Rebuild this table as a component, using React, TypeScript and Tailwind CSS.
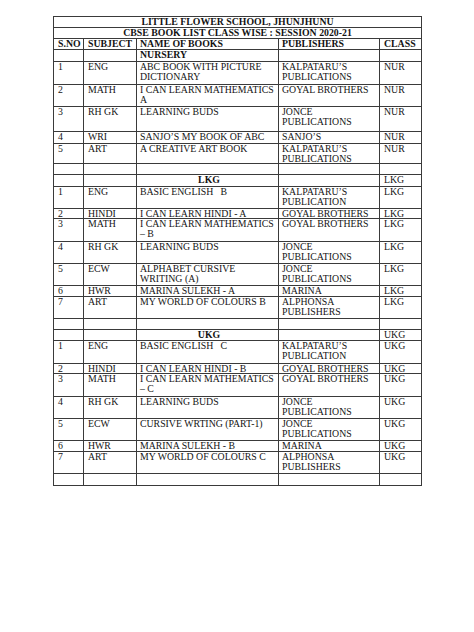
type Row = {
  h: string;
  cells: string[];
  bold?: boolean;
  section?: boolean;
};

const cols = ["w-[30px] pl-[4px]", "w-[53px] pl-[4px]", "w-[142px] pl-[3px]", "w-[101px] pl-[3px]", "w-[42px] pl-[4px]"];

const rows: Row[] = [
  { h: "h-[11px]", cells: ["S.NO", "SUBJECT", "NAME OF BOOKS", "PUBLISHERS", "CLASS"], bold: true },
  { h: "h-[12px]", cells: ["", "", "NURSERY", "", ""], bold: true },
  { h: "h-[23px]", cells: ["1", "ENG", "ABC BOOK WITH PICTURE\nDICTIONARY", "KALPATARU’S\nPUBLICATIONS", "NUR"] },
  { h: "h-[22px]", cells: ["2", "MATH", "I CAN LEARN MATHEMATICS\nA", "GOYAL BROTHERS", "NUR"] },
  { h: "h-[25px]", cells: ["3", "RH GK", "LEARNING BUDS", "JONCE\nPUBLICATIONS", "NUR"] },
  { h: "h-[12px]", cells: ["4", "WRI", "SANJO’S MY BOOK OF ABC", "SANJO’S", "NUR"] },
  { h: "h-[20px]", cells: ["5", "ART", "A CREATIVE ART BOOK", "KALPATARU’S\nPUBLICATIONS", "NUR"] },
  { h: "h-[11px]", cells: ["", "", "", "", ""] },
  { h: "h-[12px]", cells: ["", "", "LKG", "", "LKG"], section: true },
  { h: "h-[22px]", cells: ["1", "ENG", "BASIC ENGLISH   B", "KALPATARU’S\nPUBLICATION", "LKG"] },
  { h: "h-[10px]", cells: ["2", "HINDI", "I CAN LEARN HINDI - A", "GOYAL BROTHERS", "LKG"] },
  { h: "h-[23px]", cells: ["3", "MATH", "I CAN LEARN MATHEMATICS\n– B", "GOYAL BROTHERS", "LKG"] },
  { h: "h-[22px]", cells: ["4", "RH GK", "LEARNING BUDS", "JONCE\nPUBLICATIONS", "LKG"] },
  { h: "h-[22px]", cells: ["5", "ECW", "ALPHABET CURSIVE\nWRITING (A)", "JONCE\nPUBLICATIONS", "LKG"] },
  { h: "h-[11px]", cells: ["6", "HWR", "MARINA SULEKH - A", "MARINA", "LKG"] },
  { h: "h-[22px]", cells: ["7", "ART", "MY WORLD OF COLOURS B", "ALPHONSA\nPUBLISHERS", "LKG"] },
  { h: "h-[11px]", cells: ["", "", "", "", ""] },
  { h: "h-[11px]", cells: ["", "", "UKG", "", "UKG"], section: true },
  { h: "h-[23px]", cells: ["1", "ENG", "BASIC ENGLISH   C", "KALPATARU’S\nPUBLICATION", "UKG"] },
  { h: "h-[10px]", cells: ["2", "HINDI", "I CAN LEARN HINDI - B", "GOYAL BROTHERS", "UKG"] },
  { h: "h-[23px]", cells: ["3", "MATH", "I CAN LEARN MATHEMATICS\n– C", "GOYAL BROTHERS", "UKG"] },
  { h: "h-[22px]", cells: ["4", "RH GK", "LEARNING BUDS", "JONCE\nPUBLICATIONS", "UKG"] },
  { h: "h-[22px]", cells: ["5", "ECW", "CURSIVE WRTING (PART-1)", "JONCE\nPUBLICATIONS", "UKG"] },
  { h: "h-[11px]", cells: ["6", "HWR", "MARINA SULEKH - B", "MARINA", "UKG"] },
  { h: "h-[22px]", cells: ["7", "ART", "MY WORLD OF COLOURS C", "ALPHONSA\nPUBLISHERS", "UKG"] },
  { h: "h-[12px]", cells: ["", "", "", "", ""] },
];

function TableRow({ row }: { row: Row }) {
  return (
    <div className={`flex border-b border-[#3a3a3a] ${row.h}`}>
      {row.cells.map((text, i) => {
        const isLabel = row.section && i === 2;
        return (
          <div
            key={i}
            className={`${cols[i]} shrink-0 border-r border-[#3a3a3a] whitespace-pre-wrap ${
              row.bold || isLabel ? "font-bold" : ""
            } ${isLabel ? "text-center pl-0" : ""}`}
          >
            {text}
          </div>
        );
      })}
    </div>
  );
}

export default function App() {
  return (
    <div className="min-h-screen bg-white pt-[16px] pl-[53px]">
      <div
        className="w-[369px] border-t border-l border-[#3a3a3a] text-[9.8px] leading-[10.2px] text-[#141414]"
        style={{ fontFamily: '"Liberation Serif", "Times New Roman", serif' }}
      >
        <div className="h-[11px] border-b border-r border-[#3a3a3a] text-center font-bold">
          LITTLE FLOWER SCHOOL, JHUNJHUNU
        </div>
        <div className="h-[11px] border-b border-r border-[#3a3a3a] text-center font-bold">
          CBSE BOOK LIST CLASS WISE : SESSION 2020-21
        </div>
        {rows.map((row, i) => (
          <TableRow key={i} row={row} />
        ))}
      </div>
    </div>
  );
}
